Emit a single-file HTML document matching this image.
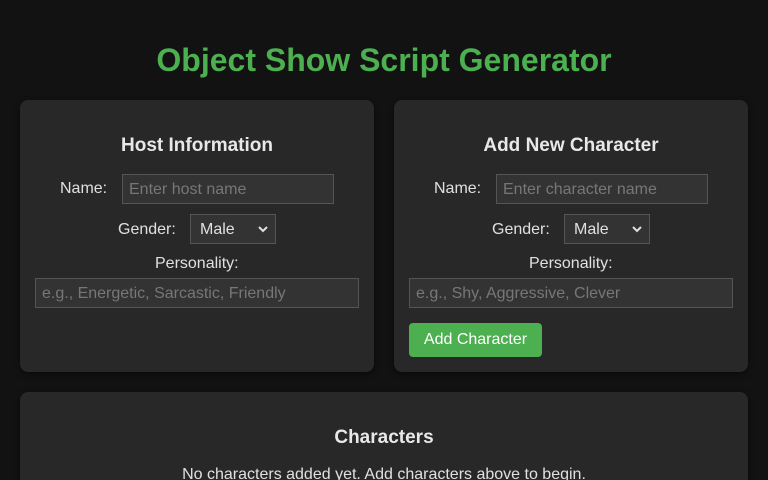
<!DOCTYPE html>
<html><head><style>
html,body{margin:0;height:480px;overflow:hidden}
body{background:#121212;font-family:"Liberation Sans",sans-serif;color:#e0e0e0;width:768px;position:relative}
h1{color:#4caf50;text-align:center;font-size:32px;margin:0;position:absolute;top:41px;left:0;width:768px;line-height:38px}
.card{position:absolute;background:#282828;border-radius:8px;box-shadow:0 2px 6px rgba(0,0,0,.5)}
h2{position:absolute;left:0;width:100%;text-align:center;font-size:19px;margin:0;top:35px;line-height:22px;color:#e8e8e8}
.lbl{position:absolute;font-size:16px;line-height:20px;color:#e0e0e0}
.in{position:absolute;box-sizing:border-box;background:#333;border:1px solid #555;height:30px;font-size:16px;color:#777;padding:6px 0 0 6px;line-height:18px}
.sel{position:absolute;box-sizing:border-box;background:#333;border:1px solid #555;height:30px;width:86px;font-size:16px;color:#e0e0e0;padding:6px 0 0 9px;line-height:18px}
.sel svg{position:absolute;right:7px;top:11px}
.btn{position:absolute;background:#4caf50;color:#fff;font-size:16px;border-radius:4px;width:133px;height:34px;line-height:34px;text-align:center}
</style></head><body>
<h1>Object Show Script Generator</h1>
<div class="card" style="left:20px;top:100px;width:354px;height:272px">
<h2>Host Information</h2>
<div class="lbl" style="left:40px;top:79px">Name:</div>
<div class="in" style="left:102px;top:74px;width:212px">Enter host name</div>
<div class="lbl" style="left:98px;top:120px">Gender:</div>
<div class="sel" style="left:170px;top:114px">Male<svg width="10" height="7"><path d="M1 1l4 4 4-4" stroke="#e0e0e0" stroke-width="2" fill="none"/></svg></div>
<div class="lbl" style="left:135px;top:154px">Personality:</div>
<div class="in" style="left:15px;top:178px;width:324px">e.g., Energetic, Sarcastic, Friendly</div>
</div>
<div class="card" style="left:394px;top:100px;width:354px;height:272px">
<h2>Add New Character</h2>
<div class="lbl" style="left:40px;top:79px">Name:</div>
<div class="in" style="left:102px;top:74px;width:212px">Enter character name</div>
<div class="lbl" style="left:98px;top:120px">Gender:</div>
<div class="sel" style="left:170px;top:114px">Male<svg width="10" height="7"><path d="M1 1l4 4 4-4" stroke="#e0e0e0" stroke-width="2" fill="none"/></svg></div>
<div class="lbl" style="left:135px;top:154px">Personality:</div>
<div class="in" style="left:15px;top:178px;width:324px">e.g., Shy, Aggressive, Clever</div>
<div class="btn" style="left:15px;top:223px">Add Character</div>
</div>
<div class="card" style="left:20px;top:392px;width:728px;height:88px;border-radius:8px 8px 0 0">
<h2>Characters</h2>
<div class="lbl" style="left:0;width:100%;text-align:center;top:73px">No characters added yet. Add characters above to begin.</div>
</div>
</body></html>
